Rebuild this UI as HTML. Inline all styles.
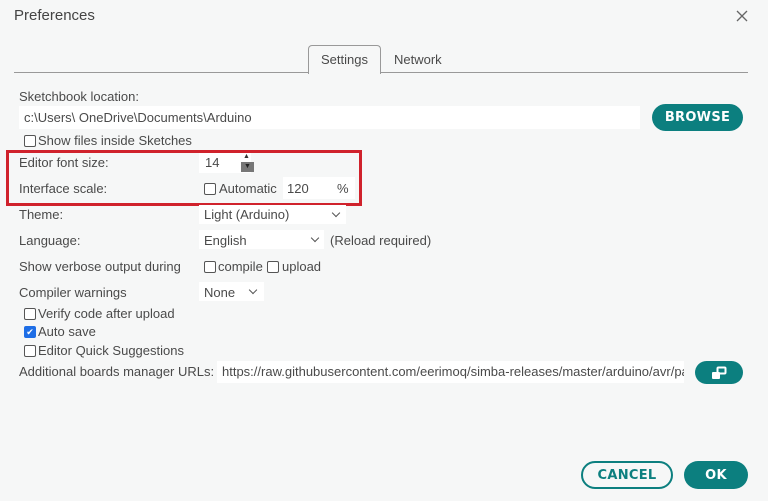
<!DOCTYPE html>
<html><head><meta charset="utf-8"><style>
body{margin:0;width:768px;height:501px;background:#f6f7f7;font-family:"Liberation Sans",Arial,sans-serif;color:#4a4a4a;position:relative;overflow:hidden;font-size:13px}
.a{position:absolute;white-space:nowrap}
.in{position:absolute;background:#fff}
.cb{position:absolute;width:10px;height:10px;border:1px solid #555;border-radius:2px;background:#fff}
.btn{position:absolute;background:#0c7f7f;color:#fff;border-radius:14px;font-weight:bold;font-family:"DejaVu Sans",sans-serif;font-size:13px;letter-spacing:.3px;display:flex;align-items:center;justify-content:center;box-sizing:border-box}
.chev{position:absolute;width:5px;height:5px;border-right:1px solid #555;border-bottom:1px solid #555;transform:rotate(45deg)}
</style></head><body>
<div class="a" style="left:14px;top:7px;font-size:15px;color:#444">Preferences</div>
<svg class="a" style="left:736px;top:10px" width="12" height="12" viewBox="0 0 12 12"><path d="M1 1L11 11M11 1L1 11" stroke="#666" stroke-width="1.3"/></svg>
<div class="a" style="left:14px;top:72px;width:734px;height:1px;background:#999"></div>
<div class="a" style="left:308px;top:45px;width:71px;height:28px;border:1px solid #999;border-bottom:none;border-radius:4px 4px 0 0;background:#f6f7f7"></div>
<div class="a" style="left:321px;top:52px;font-size:13px">Settings</div>
<div class="a" style="left:394px;top:52px;font-size:13px">Network</div>

<div class="a" style="left:19px;top:89px">Sketchbook location:</div>
<div class="in" style="left:19px;top:106px;width:621px;height:23px"></div>
<div class="a" style="left:24px;top:110px">c:\Users\ OneDrive\Documents\Arduino</div>
<div class="btn" style="left:652px;top:104px;width:91px;height:27px">BROWSE</div>
<div class="cb" style="left:24px;top:135px"></div>
<div class="a" style="left:38px;top:133px">Show files inside Sketches</div>

<div class="a" style="left:19px;top:155px">Editor font size:</div>
<div class="in" style="left:199px;top:152px;width:52px;height:21px"></div>
<div class="a" style="left:205px;top:155px">14</div>
<div class="a" style="left:243px;top:153px;font-size:7px;color:#333">▲</div>
<div class="a" style="left:241px;top:162px;width:13px;height:10px;background:#777"></div>
<div class="a" style="left:244px;top:163px;font-size:7px;color:#222">▼</div>
<div class="a" style="left:19px;top:181px">Interface scale:</div>
<div class="cb" style="left:204px;top:183px"></div>
<div class="a" style="left:219px;top:181px">Automatic</div>
<div class="in" style="left:283px;top:177px;width:72px;height:22px"></div>
<div class="a" style="left:287px;top:181px">120</div>
<div class="a" style="left:337px;top:181px">%</div>
<div class="a" style="left:6px;top:150px;width:350px;height:50px;border:3px solid #d0222c"></div>

<div class="a" style="left:19px;top:207px">Theme:</div>
<div class="in" style="left:199px;top:205px;width:147px;height:19px"></div>
<div class="a" style="left:204px;top:207px">Light (Arduino)</div>
<div class="chev" style="left:333px;top:210px"></div>
<div class="a" style="left:19px;top:233px">Language:</div>
<div class="in" style="left:199px;top:230px;width:125px;height:19px"></div>
<div class="a" style="left:204px;top:233px">English</div>
<div class="chev" style="left:312px;top:235px"></div>
<div class="a" style="left:330px;top:233px">(Reload required)</div>
<div class="a" style="left:19px;top:259px">Show verbose output during</div>
<div class="cb" style="left:204px;top:261px"></div>
<div class="a" style="left:218px;top:259px">compile</div>
<div class="cb" style="left:267px;top:261px"></div>
<div class="a" style="left:282px;top:259px">upload</div>
<div class="a" style="left:19px;top:285px">Compiler warnings</div>
<div class="in" style="left:199px;top:282px;width:65px;height:19px"></div>
<div class="a" style="left:204px;top:285px">None</div>
<div class="chev" style="left:250px;top:287px"></div>
<div class="cb" style="left:24px;top:308px"></div>
<div class="a" style="left:38px;top:306px">Verify code after upload</div>
<div class="cb" style="left:24px;top:326px;background:#1e6ee6;border-color:#1e6ee6;color:#fff;font-size:9px;line-height:10px;text-align:center">✔</div>
<div class="a" style="left:38px;top:324px">Auto save</div>
<div class="cb" style="left:24px;top:345px"></div>
<div class="a" style="left:38px;top:343px">Editor Quick Suggestions</div>
<div class="a" style="left:19px;top:364px">Additional boards manager URLs:</div>
<div class="in" style="left:217px;top:361px;width:467px;height:22px;overflow:hidden"><span class="a" style="left:5px;top:3px">https://raw.githubusercontent.com/eerimoq/simba-releases/master/arduino/avr/package</span></div>
<div class="btn" style="left:695px;top:361px;width:48px;height:23px;border-radius:12px">
<svg width="18" height="14" viewBox="0 0 18 14"><rect x="7.5" y="1.5" width="8" height="6" rx="1" fill="none" stroke="#fff" stroke-width="2"/><rect x="2" y="6" width="8" height="7" rx="1" fill="#fff"/></svg></div>
<div class="btn" style="left:581px;top:461px;width:92px;height:28px;border:2px solid #0c7f7f;background:transparent;color:#0c7f7f">CANCEL</div>
<div class="btn" style="left:684px;top:461px;width:64px;height:28px">OK</div>
</body></html>
